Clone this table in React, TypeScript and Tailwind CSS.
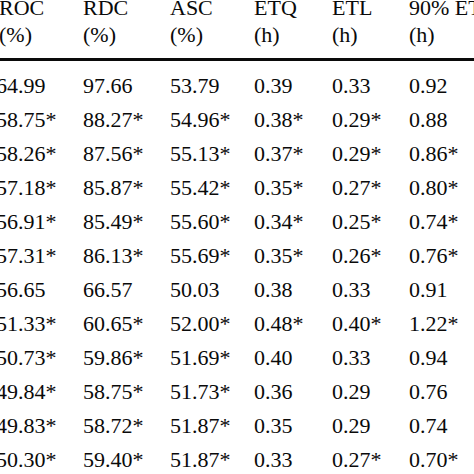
const HEADERS: [string, string][] = [
  ["ROC", "(%)"],
  ["RDC", "(%)"],
  ["ASC", "(%)"],
  ["ETQ", "(h)"],
  ["ETL", "(h)"],
  ["90% ETL", "(h)"],
];

const ROWS: string[][] = [
  ["64.99", "97.66", "53.79", "0.39", "0.33", "0.92"],
  ["58.75*", "88.27*", "54.96*", "0.38*", "0.29*", "0.88"],
  ["58.26*", "87.56*", "55.13*", "0.37*", "0.29*", "0.86*"],
  ["57.18*", "85.87*", "55.42*", "0.35*", "0.27*", "0.80*"],
  ["56.91*", "85.49*", "55.60*", "0.34*", "0.25*", "0.74*"],
  ["57.31*", "86.13*", "55.69*", "0.35*", "0.26*", "0.76*"],
  ["56.65", "66.57", "50.03", "0.38", "0.33", "0.91"],
  ["51.33*", "60.65*", "52.00*", "0.48*", "0.40*", "1.22*"],
  ["50.73*", "59.86*", "51.69*", "0.40", "0.33", "0.94"],
  ["49.84*", "58.75*", "51.73*", "0.36", "0.29", "0.76"],
  ["49.83*", "58.72*", "51.87*", "0.35", "0.29", "0.74"],
  ["50.30*", "59.40*", "51.87*", "0.33", "0.27*", "0.70*"],
];

const COLS = "grid grid-cols-[87px_87px_84px_78px_77px_120px]";

export default function App() {
  return (
    <div className="w-[474px] h-[474px] overflow-hidden bg-white text-[#0a0a0a] font-['Liberation_Serif','Times_New_Roman',serif] text-[22px]">
      <div className="ml-[-4px] w-[533px] mt-[-6px]">
        {/* header */}
        <div className={`${COLS} leading-[27px]`}>
          {HEADERS.map(([a, b], i) => (
            <div key={a} className={`whitespace-nowrap ${i === 0 ? "pl-[3px]" : ""}`}>
              <div>{a}</div>
              <div>{b}</div>
            </div>
          ))}
        </div>

        <div className="mt-[9.5px] h-[3px] bg-[#0a0a0a]" />

        {/* body */}
        <div className="mt-[8px]">
          {ROWS.map((row, r) => (
            <div key={r} className={`${COLS} h-[34px] leading-[34px]`}>
              {row.map((v, c) => (
                <div key={c} className="whitespace-nowrap">
                  {v}
                </div>
              ))}
            </div>
          ))}
        </div>
      </div>
    </div>
  );
}
